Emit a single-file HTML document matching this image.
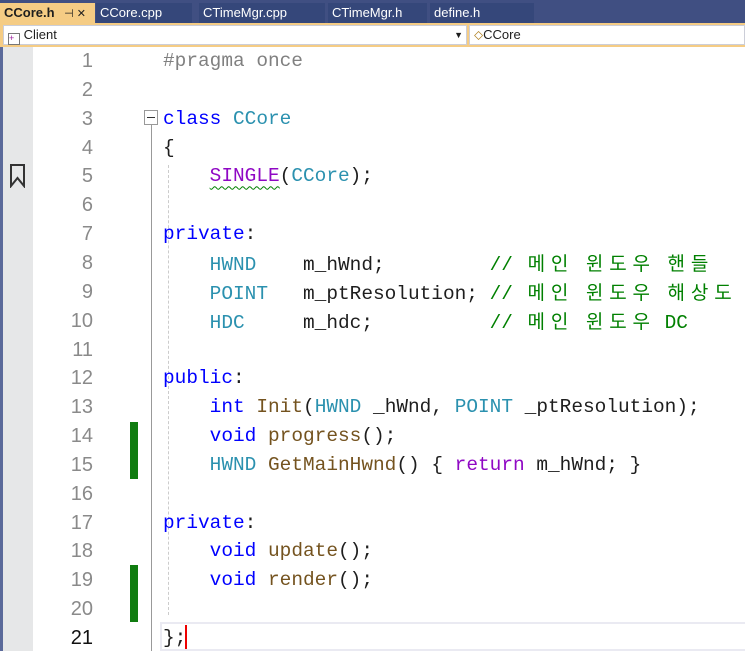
<!DOCTYPE html>
<html><head><meta charset="utf-8"><style>
*{margin:0;padding:0;box-sizing:border-box}
body{width:745px;height:651px;overflow:hidden;background:#fff;position:relative;font-family:"Liberation Sans",sans-serif}
.tabs{position:absolute;left:0;top:0;width:745px;height:23px;background:#404f82}
.tab{position:absolute;top:3px;height:20px;background:#35477a;color:#fff;font-size:13px;line-height:20px;padding-left:4px}
.nav{position:absolute;left:0;top:23px;width:745px;height:24px;background:#f5cc84}
.dd{position:absolute;top:2px;height:20px;background:#fff;border:1px solid #ccced8;font-size:13px;line-height:18px;color:#1e1e1e}
.gut{position:absolute;left:0;top:47px;width:33px;height:604px;background:#e6e7e8;border-left:3px solid #5b6a9a}
.ln{position:absolute;left:40px;width:53px;text-align:right;font-family:"Liberation Sans",sans-serif;font-size:20px;color:#8a8a8a;height:28.85px;line-height:28.85px}
.code{position:absolute;left:163px;top:47px;font-family:"Liberation Mono",monospace;font-size:19.45px;color:#1e1e1e}
.code div{height:28.85px;line-height:28.85px;white-space:pre}
.h{display:inline-block;width:23.34px;text-align:center;font-family:"Noto Sans CJK KR","NanumGothic",sans-serif;font-size:19px}
.kw{color:#0000ff}.ty{color:#2b91af}.fn{color:#74531f}.mc{color:#8f08c4}.cm{color:#008000}.rt{color:#8f08c4}
.bar{position:absolute;left:130px;width:8px;background:#107c10}
</style></head><body>
<div class="tabs">
<div class="tab" style="left:0;width:95px;background:#f5cc84;color:#1e1e1e;font-weight:bold;">CCore.h <span style="font-weight:normal;font-size:11px;margin-left:6px">⊣ ✕</span></div>
<div class="tab" style="left:96px;width:96px">CCore.cpp</div>
<div class="tab" style="left:199px;width:126px">CTimeMgr.cpp</div>
<div class="tab" style="left:328px;width:99px">CTimeMgr.h</div>
<div class="tab" style="left:430px;width:104px">define.h</div>
</div>
<div class="nav">
<div class="dd" style="left:3px;width:464px;padding-left:4px"><span style="display:inline-block;width:12px;height:12px;border:1px solid #777;font-size:9px;line-height:9px;color:#a020a0;vertical-align:-2px">+</span> Client<span style="position:absolute;right:3px;top:0;font-size:9px">▼</span></div>
<div class="dd" style="left:469px;width:276px;padding-left:4px"><span style="color:#b08020">⬦</span>CCore</div>
</div>
<div class="gut"></div>
<svg style="position:absolute;left:9px;top:164px" width="18" height="24"><path d="M2 1H15V22L8.5 14L2 22Z" fill="none" stroke="#333" stroke-width="2"/></svg>
<div class="bar" style="top:422px;height:57px"></div>
<div class="bar" style="top:565px;height:57px"></div>
<div style="position:absolute;left:144px;top:110px;width:14px;height:15px;border:1px solid #999;background:#fff"><div style="position:absolute;left:2px;top:6px;width:8px;height:1px;background:#333"></div></div>
<div style="position:absolute;left:151px;top:125px;width:1px;height:526px;background:#999"></div>
<div style="position:absolute;left:168px;top:165px;width:0;height:450px;border-left:1px dashed #ccc"></div>
<div style="position:absolute;left:160px;top:622px;width:585px;height:29px;border:2px solid #eaeaf2;border-right:none"></div>
<div style="position:absolute;left:185px;top:625px;width:2px;height:24px;background:#e00"></div>
<div id="nums"></div>
<div class="code"><div style="color:#808080">#pragma once</div><div> </div><div><span class="kw">class</span> <span class="ty">CCore</span></div><div>{</div><div>    <span class="mc" style="text-decoration:underline wavy #008000;text-decoration-thickness:1px;text-underline-offset:4px">SINGLE</span>(<span class="ty">CCore</span>);</div><div> </div><div><span class="kw">private</span>:</div><div>    <span class="ty">HWND</span>    m_hWnd;         <span class="cm">// <span class="h">메</span><span class="h">인</span> <span class="h">윈</span><span class="h">도</span><span class="h">우</span> <span class="h">핸</span><span class="h">들</span></span></div><div>    <span class="ty">POINT</span>   m_ptResolution; <span class="cm">// <span class="h">메</span><span class="h">인</span> <span class="h">윈</span><span class="h">도</span><span class="h">우</span> <span class="h">해</span><span class="h">상</span><span class="h">도</span></span></div><div>    <span class="ty">HDC</span>     m_hdc;          <span class="cm">// <span class="h">메</span><span class="h">인</span> <span class="h">윈</span><span class="h">도</span><span class="h">우</span> DC</span></div><div> </div><div><span class="kw">public</span>:</div><div>    <span class="kw">int</span> <span class="fn">Init</span>(<span class="ty">HWND</span> _hWnd, <span class="ty">POINT</span> _ptResolution);</div><div>    <span class="kw">void</span> <span class="fn">progress</span>();</div><div>    <span class="ty">HWND</span> <span class="fn">GetMainHwnd</span>() { <span class="rt">return</span> m_hWnd; }</div><div> </div><div><span class="kw">private</span>:</div><div>    <span class="kw">void</span> <span class="fn">update</span>();</div><div>    <span class="kw">void</span> <span class="fn">render</span>();</div><div> </div><div>};</div></div>
<script>
var s='';for(var i=1;i<=21;i++){s+='<div class="ln" style="top:'+(47+(i-1)*28.85)+'px;'+(i==21?'color:#111':'')+'">'+i+'</div>';}
document.getElementById('nums').innerHTML=s;
</script>
</body></html>
